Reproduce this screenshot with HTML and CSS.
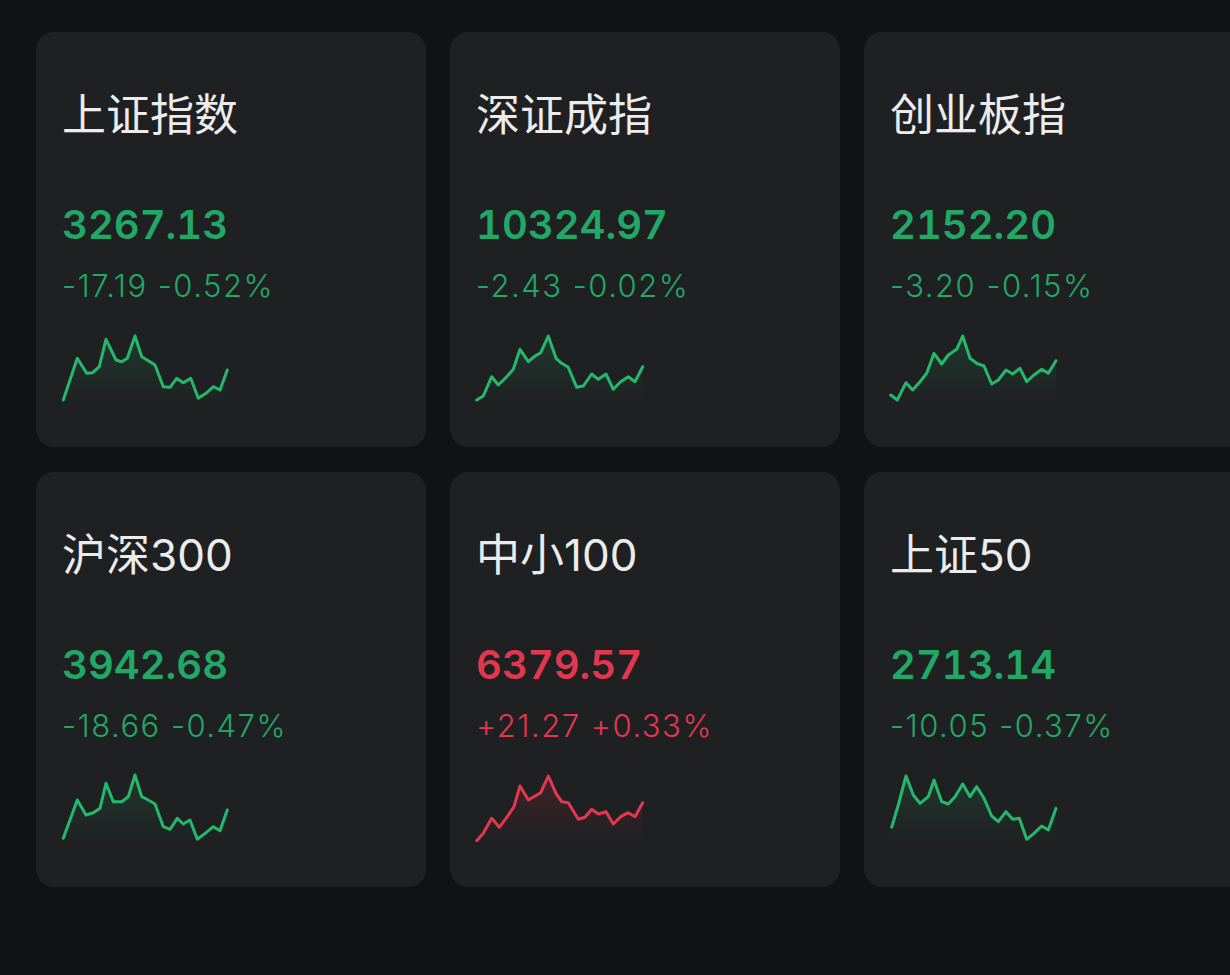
FILE: index.html
```html
<!DOCTYPE html>
<html>
<head>
  <meta charset="utf-8">
  <title>指数行情</title>
  <link rel="stylesheet" href="styles.css">
</head>
<body>
  <div class="board">
    <div class="card up-green">
      <div class="name">上证指数</div>
      <div class="price">3267.13</div>
      <div class="change">-17.19 -0.52%</div>
      <svg class="spark" width="170" height="72" viewBox="0 0 170 72">
        <defs>
          <linearGradient id="g1" x1="0" y1="0" x2="0" y2="1">
            <stop offset="0" stop-color="#24b56a" stop-opacity="0.16"/>
            <stop offset="1" stop-color="#24b56a" stop-opacity="0"/>
          </linearGradient>
        </defs>
        <polygon fill="url(#g1)" points="1.3,68 15.3,26.3 24.7,41.3 30.7,40.7 37.3,34.7 44,7.3 54,28 59.7,29.7 65.3,26.3 73,4 79.7,24.7 88,29.7 93,33 101.3,54.7 108,55.3 114.7,46.3 121.3,50.7 128.7,46.3 136.3,66.3 144,61.3 151.3,54.7 158,58 165.3,38 165.3,72 1.3,72"/>
        <polyline class="line" points="1.3,68 15.3,26.3 24.7,41.3 30.7,40.7 37.3,34.7 44,7.3 54,28 59.7,29.7 65.3,26.3 73,4 79.7,24.7 88,29.7 93,33 101.3,54.7 108,55.3 114.7,46.3 121.3,50.7 128.7,46.3 136.3,66.3 144,61.3 151.3,54.7 158,58 165.3,38"/>
      </svg>
    </div>

    <div class="card up-green">
      <div class="name">深证成指</div>
      <div class="price">10324.97</div>
      <div class="change">-2.43 -0.02%</div>
      <svg class="spark" width="170" height="72" viewBox="0 0 170 72">
        <defs>
          <linearGradient id="g2" x1="0" y1="0" x2="0" y2="1">
            <stop offset="0" stop-color="#24b56a" stop-opacity="0.16"/>
            <stop offset="1" stop-color="#24b56a" stop-opacity="0"/>
          </linearGradient>
        </defs>
        <polygon fill="url(#g2)" points="0.7,68 7.3,64 15.7,44.7 22.3,53 30.7,44.7 37.3,37.3 44,17.3 52.3,29.7 59,24 64.7,20.7 72.3,4 80,26.3 85.7,31.3 92.3,35.3 100.7,55.3 107.3,54 115.7,42 122.3,47.3 130,42 137.3,57.3 144.7,49.7 152.3,44.7 159,49.7 166.7,34.7 166.7,72 0.7,72"/>
        <polyline class="line" points="0.7,68 7.3,64 15.7,44.7 22.3,53 30.7,44.7 37.3,37.3 44,17.3 52.3,29.7 59,24 64.7,20.7 72.3,4 80,26.3 85.7,31.3 92.3,35.3 100.7,55.3 107.3,54 115.7,42 122.3,47.3 130,42 137.3,57.3 144.7,49.7 152.3,44.7 159,49.7 166.7,34.7"/>
      </svg>
    </div>

    <div class="card up-green">
      <div class="name">创业板指</div>
      <div class="price">2152.20</div>
      <div class="change">-3.20 -0.15%</div>
      <svg class="spark" width="170" height="72" viewBox="0 0 170 72">
        <defs>
          <linearGradient id="g3" x1="0" y1="0" x2="0" y2="1">
            <stop offset="0" stop-color="#24b56a" stop-opacity="0.16"/>
            <stop offset="1" stop-color="#24b56a" stop-opacity="0"/>
          </linearGradient>
        </defs>
        <polygon fill="url(#g3)" points="0.7,63 7.3,68 16,50.7 22.7,58 30,49.7 36.7,41.3 44,21.3 51.7,32 58.3,23 66.7,17.3 72.7,4 80,26.3 86.7,31.3 94,34 101.7,52 108.3,48 116,38 122.7,42 130,36.3 136.7,49.7 144,43 151.7,37.3 158.3,41.3 166,28.7 166,72 0.7,72"/>
        <polyline class="line" points="0.7,63 7.3,68 16,50.7 22.7,58 30,49.7 36.7,41.3 44,21.3 51.7,32 58.3,23 66.7,17.3 72.7,4 80,26.3 86.7,31.3 94,34 101.7,52 108.3,48 116,38 122.7,42 130,36.3 136.7,49.7 144,43 151.7,37.3 158.3,41.3 166,28.7"/>
      </svg>
    </div>

    <div class="card up-green">
      <div class="name">沪深300</div>
      <div class="price">3942.68</div>
      <div class="change">-18.66 -0.47%</div>
      <svg class="spark" width="170" height="72" viewBox="0 0 170 72">
        <defs>
          <linearGradient id="g4" x1="0" y1="0" x2="0" y2="1">
            <stop offset="0" stop-color="#24b56a" stop-opacity="0.16"/>
            <stop offset="1" stop-color="#24b56a" stop-opacity="0"/>
          </linearGradient>
        </defs>
        <polygon fill="url(#g4)" points="1.3,66.3 15.3,28 24,43 31.3,40.7 38,36.3 44,11.3 51.3,29.7 59.7,29.7 66.3,24.7 73,3 79.7,24.7 86.3,28 93,32 101.3,54.7 108,57.3 115.3,46.3 121.3,52 128,48 135.3,67.3 144,60.7 151.3,54.7 158,58.7 165.3,38 165.3,72 1.3,72"/>
        <polyline class="line" points="1.3,66.3 15.3,28 24,43 31.3,40.7 38,36.3 44,11.3 51.3,29.7 59.7,29.7 66.3,24.7 73,3 79.7,24.7 86.3,28 93,32 101.3,54.7 108,57.3 115.3,46.3 121.3,52 128,48 135.3,67.3 144,60.7 151.3,54.7 158,58.7 165.3,38"/>
      </svg>
    </div>

    <div class="card up-red">
      <div class="name">中小100</div>
      <div class="price">6379.57</div>
      <div class="change">+21.27 +0.33%</div>
      <svg class="spark" width="170" height="72" viewBox="0 0 170 72">
        <defs>
          <linearGradient id="g5" x1="0" y1="0" x2="0" y2="1">
            <stop offset="0" stop-color="#e5384f" stop-opacity="0.16"/>
            <stop offset="1" stop-color="#e5384f" stop-opacity="0"/>
          </linearGradient>
        </defs>
        <polygon fill="url(#g5)" points="0.7,68.7 7.3,61.3 15.7,46.3 23.3,55.3 31.3,44.7 38,34.7 44,14 52.3,28 59,24 64.7,20.7 72.3,4 80,21.3 85.7,29.7 92.3,30.7 102.3,47.3 109,45.3 115.7,37.3 122.3,42 130,39.7 137.3,52 144.7,44.7 152.3,40.7 159,44.7 166.7,30.7 166.7,72 0.7,72"/>
        <polyline class="line" points="0.7,68.7 7.3,61.3 15.7,46.3 23.3,55.3 31.3,44.7 38,34.7 44,14 52.3,28 59,24 64.7,20.7 72.3,4 80,21.3 85.7,29.7 92.3,30.7 102.3,47.3 109,45.3 115.7,37.3 122.3,42 130,39.7 137.3,52 144.7,44.7 152.3,40.7 159,44.7 166.7,30.7"/>
      </svg>
    </div>

    <div class="card up-green">
      <div class="name">上证50</div>
      <div class="price">2713.14</div>
      <div class="change">-10.05 -0.37%</div>
      <svg class="spark" width="170" height="72" viewBox="0 0 170 72">
        <defs>
          <linearGradient id="g6" x1="0" y1="0" x2="0" y2="1">
            <stop offset="0" stop-color="#24b56a" stop-opacity="0.16"/>
            <stop offset="1" stop-color="#24b56a" stop-opacity="0"/>
          </linearGradient>
        </defs>
        <polygon fill="url(#g6)" points="1.7,55.3 8.3,33 16,4 23.3,23 30,31.3 38.3,24.7 44,8 51.7,29.7 58.3,32 65,24.7 72.7,12 80,24.7 86.7,14.7 94,26.3 101.7,44 108.3,49.7 116,39.7 122.7,47.3 129.3,46.3 136.7,67.3 144,61.3 151.7,54 158.3,58 166,36.3 166,72 1.7,72"/>
        <polyline class="line" points="1.7,55.3 8.3,33 16,4 23.3,23 30,31.3 38.3,24.7 44,8 51.7,29.7 58.3,32 65,24.7 72.7,12 80,24.7 86.7,14.7 94,26.3 101.7,44 108.3,49.7 116,39.7 122.7,47.3 129.3,46.3 136.7,67.3 144,61.3 151.7,54 158.3,58 166,36.3"/>
      </svg>
    </div>
  </div>
</body>
</html>
```

FILE: styles.css
```css
/* index cards */
html, body {
  margin: 0;
  padding: 0;
  background-color: #111214;
  overflow: hidden;
}

body {
  font-family: Inter, "Noto Sans CJK SC", sans-serif;
  width: 1230px;
  height: 975px;
}

.board {
  display: grid;
  grid-template-columns: repeat(3, 390px);
  grid-auto-rows: 415px;
  gap: 25px 24px;
  padding: 32px 0 0 36px;
}

.card {
  background-color: #1f2022;
  border-radius: 18px;
  padding: 57px 0 0 26px;
  box-sizing: border-box;
  display: flex;
  flex-direction: column;
  align-items: flex-start;
}

.name {
  font-size: 44px;
  line-height: 52px;
  font-weight: 400;
  color: #ececec;
}

.price {
  font-size: 40px;
  line-height: 48px;
  font-weight: 600;
  margin-top: 60px;
  font-variant-numeric: tabular-nums;
}

.change {
  font-size: 31px;
  line-height: 36px;
  font-weight: 300;
  margin-top: 19px;
  letter-spacing: 1.5px;
}

.spark {
  display: block;
  margin-top: 28px;
  overflow: visible;
}

.line {
  fill: none;
  stroke-width: 3;
  stroke-linejoin: round;
  stroke-linecap: round;
}

.up-green .price,
.up-green .change {
  color: #22a866;
}

.up-green .line {
  stroke: #25b86b;
}

.up-red .price,
.up-red .change {
  color: #e2384f;
}

.up-red .line {
  stroke: #e5384f;
}
```
